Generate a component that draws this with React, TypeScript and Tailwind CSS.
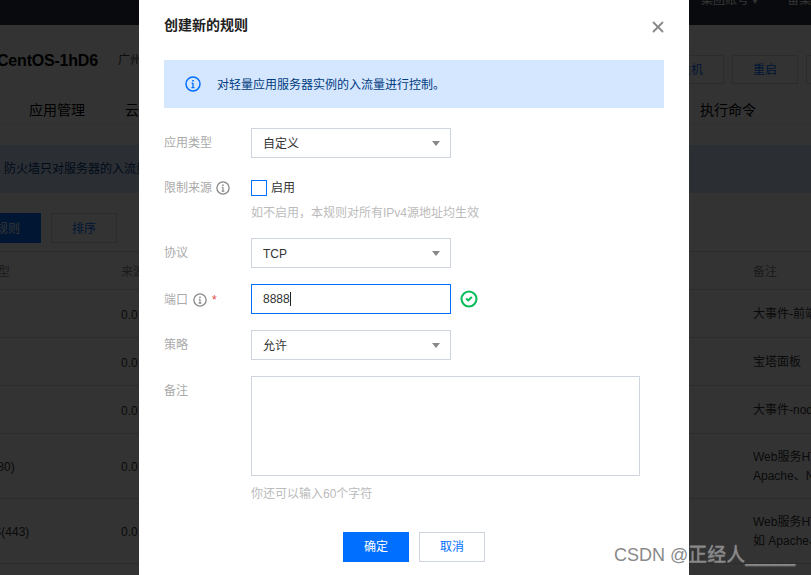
import { X, CircleCheck } from 'lucide-react';

const font = { fontFamily: '"Liberation Sans", "Noto Sans CJK SC", sans-serif' };

const InfoIcon = ({ className }: { className: string }) => (
    <svg viewBox="0 0 16 16" className={className} fill="none" stroke="currentColor">
        <circle cx="8" cy="8" r="7" strokeWidth="1.5" />
        <path d="M8 7v4.6M6.6 7.2H8M6.4 11.6h3.2" strokeWidth="1.3" />
        <path d="M8 4v1.6" strokeWidth="1.7" />
    </svg>
);

const Select = ({ value }: { value: string }) => (
    <div className="w-[200px] h-[30px] border border-[#cfd5de] pl-[11px] pr-[10px] pt-px flex items-center justify-between text-xs text-[#333]">
        <span>{value}</span>
        <svg viewBox="0 0 8 5" className="w-[8px] h-[5px] text-[#888]" fill="currentColor">
            <path d="M0 0h8L4 5z" />
        </svg>
    </div>
);

const Label = ({ children }: { children: React.ReactNode }) => (
    <div className="w-[87px] shrink-0 h-[30px] flex items-center text-xs text-[#aaaaaa] -mt-[1px]">{children}</div>
);

const rows = [
    { h: 'h-[48px]', type: '自定义', note: ['大事件-前端项目'] },
    { h: 'h-[48px]', type: '自定义', note: ['宝塔面板'] },
    { h: 'h-[48px]', type: '自定义', note: ['大事件-node接口'] },
    { h: 'h-[65px]', type: 'HTTP(80)', note: ['Web服务HTTP，如', 'Apache、Nginx'] },
    { h: 'h-[65px]', type: 'HTTPS(443)', note: ['Web服务HTTPS，', '如 Apache、Nginx'] },
];

const Background = () => (
    <div className="w-[calc(100%+53px)] -ml-[53px] h-full bg-white text-xs text-[#333]">
        <div className="h-[25px] bg-[#2c3648] overflow-hidden flex pl-[754px] text-white whitespace-nowrap">
            <span className="-mt-[8px]">集团账号 ▾</span>
            <span className="-mt-[8px] ml-[29px]">备案</span>
        </div>
        <div className="h-[100px] border-b border-[#eeeeee] flex flex-col">
            <div className="h-[59px] pt-[30px] pl-[50px] flex items-start whitespace-nowrap">
                <span className="text-base font-bold leading-[20px] -tracking-[0.2px] text-black -mt-[4px]">CentOS-1hD6</span>
                <span className="ml-[20px] leading-[20px] text-[#444] -mt-[5px]">广州</span>
                <div className="ml-auto flex gap-[8px] -mr-[61px]">
                    <div className="w-[66px] h-[29px] border border-[#dddddd] flex items-center justify-center text-[#006eff]">关机</div>
                    <div className="w-[66px] h-[29px] border border-[#dddddd] flex items-center justify-center text-[#006eff]">重启</div>
                    <div className="w-[66px] h-[29px] border border-[#dddddd]" />
                </div>
            </div>
            <div className="flex-1 pl-[82px] pt-[16px] flex text-sm text-black whitespace-nowrap">
                <span>应用管理</span>
                <span className="ml-[40px]">云硬盘</span>
                <span className="ml-auto mr-[55px]">执行命令</span>
            </div>
        </div>
        <div className="mt-[20px] h-[48px] bg-[#d5e7ff] pl-[57px] flex items-center text-[#003b80]">
            防火墙只对服务器的入流量进行控制
        </div>
        <div className="mt-[20px] pl-[5px] flex gap-[10px]">
            <div className="w-[89px] h-[30px] bg-[#006eff] text-white pt-px flex items-center justify-end pr-[21px]">添加规则</div>
            <div className="w-[66px] h-[30px] border border-[#dddddd] text-[#006eff] pt-px flex items-center justify-center">排序</div>
        </div>
        <div className="mt-[8px] h-[39px] border-y border-[#dddddd] pt-[2px] flex items-center text-[#888]">
            <span className="w-[174px] pl-[15px]">应用类型</span>
            <span className="flex-1">来源</span>
            <span className="w-[58px]">备注</span>
        </div>
        {rows.map((r, i) => (
            <div key={i} className={`${r.h} border-b border-[#dddddd] pt-[2px] flex items-center`}>
                <span className="w-[174px] pl-[15px]">{r.type}</span>
                <span className="flex-1">0.0.0.0/0</span>
                <div className="w-[58px] whitespace-nowrap overflow-hidden leading-[19px]">
                    {r.note.map(n => (
                        <div key={n}>{n}</div>
                    ))}
                </div>
            </div>
        ))}
    </div>
);

const App = () => {
    return (
        <div className="relative w-screen h-screen overflow-hidden" style={font}>
            <Background />
            <div className="absolute inset-0 bg-black/80 flex">
                <div className="ml-[139px] w-[550px] h-full bg-white px-[25px] flex flex-col">
                    <div className="h-[60px] flex justify-between pt-[16px]">
                        <h2 className="text-sm font-bold leading-[18px] text-[#222]">创建新的规则</h2>
                        <X className="w-[18px] h-[18px] text-[#888] -mr-[3px] mt-[2px]" strokeWidth={2.4} />
                    </div>
                    <div className="h-[48px] bg-[#d5e7ff] pl-[21px] flex items-center gap-[16px] text-xs text-[#003b80]">
                        <InfoIcon className="w-[16px] h-[16px] text-[#006eff] shrink-0" />
                        <span className="pt-px">对轻量应用服务器实例的入流量进行控制。</span>
                    </div>
                    <div className="mt-[20px] flex items-center">
                        <Label>应用类型</Label>
                        <Select value="自定义" />
                    </div>
                    <div className="mt-[20px] flex">
                        <div className="w-[87px] shrink-0 h-[20px] flex items-center gap-[4px] text-xs text-[#aaaaaa]">
                            限制来源
                            <InfoIcon className="w-[14px] h-[14px] text-[#888]" />
                        </div>
                        <div>
                            <div className="h-[20px] flex items-center gap-[4px] text-xs text-[#333]">
                                <div className="w-[16px] h-[16px] border border-[#006eff]" />
                                启用
                            </div>
                            <p className="mt-[5px] leading-[20px] text-xs text-[#bbbbbb]">如不启用，本规则对所有IPv4源地址均生效</p>
                        </div>
                    </div>
                    <div className="mt-[15px] flex items-center">
                        <Label>协议</Label>
                        <Select value="TCP" />
                    </div>
                    <div className="mt-[16px] flex items-center">
                        <div className="w-[87px] shrink-0 h-[30px] pt-px flex items-center text-xs text-[#aaaaaa]">
                            端口
                            <InfoIcon className="w-[14px] h-[14px] text-[#888] ml-[5px]" />
                            <span className="ml-[5px] text-[#e54545]">*</span>
                        </div>
                        <div className="w-[200px] h-[30px] border border-[#006eff] pl-[11px] flex items-center text-xs text-[#333]">
                            8888
                            <span className="w-px h-[14px] bg-[#222]" />
                        </div>
                        <CircleCheck className="w-[18px] h-[18px] ml-[9px] text-[#0abf5b]" strokeWidth={2.8} />
                    </div>
                    <div className="mt-[16px] flex items-center">
                        <Label>策略</Label>
                        <Select value="允许" />
                    </div>
                    <div className="mt-[16px] flex">
                        <div className="pt-px">
                            <Label>备注</Label>
                        </div>
                        <div>
                            <div className="w-[389px] h-[100px] border border-[#cfd5de]" />
                            <p className="mt-[8px] leading-[20px] text-xs text-[#bbbbbb]">你还可以输入60个字符</p>
                        </div>
                    </div>
                    <div className="mt-[28px] flex justify-center gap-[10px] text-xs">
                        <div className="w-[66px] h-[30px] bg-[#006eff] text-white flex items-center justify-center">确定</div>
                        <div className="w-[66px] h-[30px] border border-[#cfd5de] text-[#006eff] flex items-center justify-center">取消</div>
                    </div>
                </div>
            </div>
            <div className="absolute left-[614px] top-[544px] text-[18px] leading-[22px] text-[#8a8a8a] whitespace-nowrap [text-shadow:0_1px_1px_#ffffff66]">
                CSDN @<span className="text-[19px]">正经人</span>_____
            </div>
        </div>
    );
};

export default App;
